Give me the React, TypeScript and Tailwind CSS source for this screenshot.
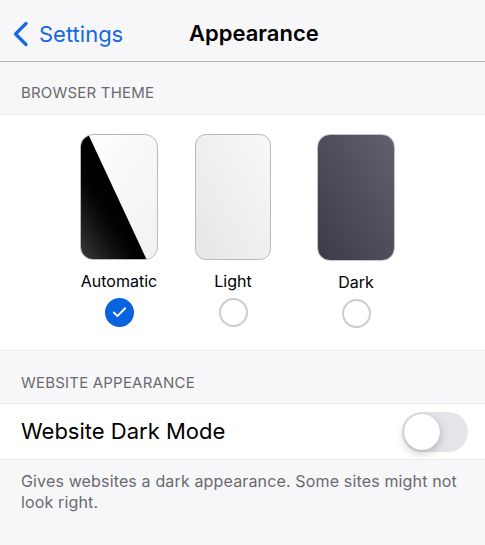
import { Check } from "lucide-react";

type ThemeOption = {
  id: string;
  label: string;
  selected: boolean;
  gap: string;
};

const themes: ThemeOption[] = [
  { id: "auto", label: "Automatic", selected: true, gap: "mr-[37px]" },
  { id: "light", label: "Light", selected: false, gap: "mr-[46px]" },
  { id: "dark", label: "Dark", selected: false, gap: "" },
];

/** Preview card for a browser theme */
function ThemePreview({ id }: { id: string }) {
  if (id === "auto") {
    return (
      <div className="relative w-[78px] h-[126px] rounded-[13px] border border-[#b9b9bd] overflow-hidden bg-gradient-to-br from-white to-[#f1f1f1]">
        <div
          className="absolute inset-0 bg-gradient-to-tr from-[#3a3a3a] via-black to-black"
          style={{ clipPath: "polygon(0 0, 10% 0, 86% 100%, 0 100%)" }}
        />
      </div>
    );
  }
  if (id === "light") {
    return (
      <div className="w-[76px] h-[126px] rounded-[11px] border border-[#b9b9bd] bg-gradient-to-bl from-[#f8f8f8] to-[#e6e6e6]" />
    );
  }
  return (
    <div className="w-[78px] h-[127px] rounded-[13px] border border-[#c4c4c8] bg-gradient-to-tr from-[#3c3b4a] to-[#62606f]" />
  );
}

export default function App() {
  return (
    <div className="w-[485px] h-[545px] bg-[#f7f7f9] font-['Inter','Liberation_Sans',sans-serif] text-black overflow-hidden">
      {/* Nav bar */}
      <div className="relative h-[62px] border-b border-[#b3b3b7]">
        <div className="absolute left-[12px] top-[21px] flex items-center text-[#1469e0]">
          <svg width="18" height="26" viewBox="0 0 18 26" fill="none" className="mr-[9px]">
            <path d="M14 2.5 L3.5 13 L14 23.5" stroke="currentColor" strokeWidth="3.2" strokeLinecap="round" strokeLinejoin="round" />
          </svg>
          <span className="text-[22px] leading-[26px]">Settings</span>
        </div>
        <span className="absolute left-[189px] top-[20px] text-[22px] leading-[26px] font-semibold">
          Appearance
        </span>
      </div>

      {/* Browser theme */}
      <div className="h-[52px] flex items-end pb-[10px] pl-[21px] text-[15px] text-[#6a6a70] tracking-[0.2px]">
        BROWSER THEME
      </div>
      <div className="bg-white border-y border-[#ececee] pt-[19px] pb-[22px] pl-[80px] flex">
        {themes.map((t) => (
          <div key={t.id} className={`flex flex-col items-center ${t.gap}`}>
            <ThemePreview id={t.id} />
            <span className="mt-[11px] text-[16px] leading-[20px]">{t.label}</span>
            {t.selected ? (
              <div className="mt-[7px] w-[29px] h-[29px] rounded-full bg-[#0a63de] flex items-center justify-center">
                <Check className="w-[17px] h-[17px] text-white" strokeWidth={2.6} />
              </div>
            ) : (
              <div className="mt-[7px] w-[29px] h-[29px] rounded-full border-2 border-[#cdcdd0]" />
            )}
          </div>
        ))}
      </div>

      {/* Website appearance */}
      <div className="h-[52px] flex items-end pb-[9px] pl-[21px] text-[15px] text-[#6a6a70] tracking-[0.2px]">
        WEBSITE APPEARANCE
      </div>
      <div className="bg-white border-y border-[#ececee] h-[57px] flex items-center justify-between pl-[21px] pr-[17px]">
        <span className="text-[22px]">Website Dark Mode</span>
        <div className="w-[66px] h-[40px] rounded-full bg-[#e4e4e9] p-[2px] flex items-center">
          <div className="w-[36px] h-[36px] rounded-full bg-white shadow-[0_3px_8px_rgba(0,0,0,0.22),0_0_1px_rgba(0,0,0,0.2)]" />
        </div>
      </div>
      <p className="pl-[21px] pr-[20px] pt-[11px] text-[16px] leading-[21px] tracking-[0.15px] text-[#6a6a70]">
        Gives websites a dark appearance. Some sites might not look right.
      </p>
    </div>
  );
}
